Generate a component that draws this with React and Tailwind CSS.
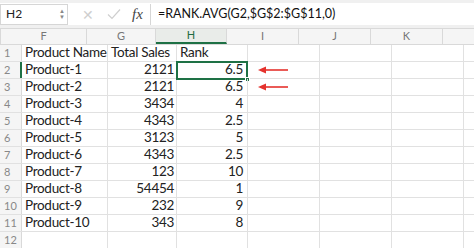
const rows = [
  ['Product Name', 'Total Sales', 'Rank'],
  ['Product-1', '2121', '6.5'],
  ['Product-2', '2121', '6.5'],
  ['Product-3', '3434', '4'],
  ['Product-4', '4343', '2.5'],
  ['Product-5', '3123', '5'],
  ['Product-6', '4343', '2.5'],
  ['Product-7', '123', '10'],
  ['Product-8', '54454', '1'],
  ['Product-9', '232', '9'],
  ['Product-10', '343', '8'],
  ['', '', ''],
];

const cols = [
  { key: 'F', w: 'w-[86px]' },
  { key: 'G', w: 'w-[69px]' },
  { key: 'H', w: 'w-[71px]' },
  { key: 'I', w: 'w-[72px]' },
  { key: 'J', w: 'w-[72px]' },
  { key: 'K', w: 'w-[72px]' },
  { key: '', w: 'w-[40px]' },
];

function Arrow() {
  return (
    <svg width="30" height="8" viewBox="0 0 30 8" className="block">
      <line x1="6" y1="4" x2="30" y2="4" stroke="#e5322d" strokeWidth="1.6" />
      <path d="M0 4 L8 0.5 L8 7.5 Z" fill="#e5322d" />
    </svg>
  );
}

export default function App() {
  return (
    <div
      className="w-[474px] h-[248px] overflow-hidden bg-white relative"
      style={{ fontFamily: 'Lato, "Noto Sans", sans-serif' }}
    >
      <div className="h-[3px] bg-[#f0f0f0]" />
      {/* formula bar */}
      <div className="h-[22px] flex items-center bg-white">
        <div className="w-[68px] h-[21px] border border-[#d6d6d6] flex items-center justify-between pl-[5px] pr-[2px] text-[12px] text-[#222]">
          <span>H2</span>
          <div className="flex flex-col items-center leading-none text-[#888] text-[6px]">
            <span>▲</span>
            <span>▼</span>
          </div>
        </div>
        <div className="w-[82px] flex items-center text-[#cfcfcf] text-[14px]">
          <span className="ml-[14px] font-light">✕</span>
          <svg width="14" height="12" viewBox="0 0 14 12" className="ml-[13px]">
            <path d="M1 6.5 L5 10.5 L13 1.5" stroke="#cfcfcf" strokeWidth="1.2" fill="none" />
          </svg>
          <span
            className="ml-[11px] text-[#444] italic text-[15px]"
            style={{ fontFamily: '"Liberation Serif", serif' }}
          >
            fx
          </span>
        </div>
        <div className="h-[21px] border-l border-[#d6d6d6] pl-[7px] flex items-center text-[12.5px] text-[#111]">
          =RANK.AVG(G2,$G$2:$G$11,0)
        </div>
      </div>
      <div className="h-[3px] bg-[#f0f0f0]" />
      {/* column headers */}
      <div className="flex h-[17px] bg-[#f5f5f5] border-y border-[#d9d9d9]">
        <div className="w-[22px] border-r border-[#d9d9d9] relative">
          <div className="absolute right-[2px] bottom-[2px] w-0 h-0 border-l-[10px] border-l-transparent border-b-[10px] border-b-[#cfcfcf]" />
        </div>
        {cols.map((c) => (
          <div
            key={c.key + c.w}
            className={`${c.w} shrink-0 border-r border-[#d9d9d9] flex items-center justify-center text-[11px] ${
              c.key === 'H' ? 'text-[#1e6b3f] border-b-2 border-b-[#1e7145] bg-[#e9ece9]' : 'text-[#777]'
            }`}
          >
            {c.key}
          </div>
        ))}
      </div>
      {/* grid */}
      {rows.map((r, i) => (
        <div key={i} className="flex h-[17px] border-b border-[#e1e1e1]">
          <div
            className={`w-[22px] shrink-0 bg-[#f5f5f5] border-r flex items-center pl-[4px] text-[11px] text-[#888] ${
              i === 1 ? 'border-r-2 border-r-[#1e7145]' : 'border-r-[#d9d9d9]'
            }`}
          >
            {i + 1}
          </div>
          <div className="w-[86px] shrink-0 border-r border-[#e1e1e1] flex items-center pl-[3px] text-[13.5px] tracking-[-0.3px] text-[#222] leading-none">
            {r[0]}
          </div>
          <div
            className={`w-[69px] shrink-0 border-r border-[#e1e1e1] flex items-center text-[13.5px] tracking-[-0.3px] text-[#222] leading-none ${
              i === 0 ? 'pl-[3px]' : 'justify-end pr-[2px]'
            }`}
          >
            {r[1]}
          </div>
          <div
            className={`w-[71px] shrink-0 border-r border-[#e1e1e1] flex items-center text-[13.5px] tracking-[-0.3px] text-[#222] leading-none relative ${
              i === 0 ? 'pl-[3px]' : 'justify-end pr-[4px]'
            }`}
          >
            {r[2]}
            {i === 1 && (
              <div className="absolute left-[-1px] top-[-1px] w-[72px] h-[19px] border-2 border-[#1e7145]">
                <div className="absolute right-[-4px] bottom-[-4px] w-[5px] h-[5px] bg-[#1e7145] border border-white" />
              </div>
            )}
          </div>
          <div className="w-[72px] shrink-0 border-r border-[#e1e1e1] flex items-center pl-[10px]">
            {(i === 1 || i === 2) && <Arrow />}
          </div>
          <div className="w-[72px] shrink-0 border-r border-[#e1e1e1]" />
          <div className="w-[72px] shrink-0 border-r border-[#e1e1e1]" />
          <div className="w-[40px] shrink-0" />
        </div>
      ))}
    </div>
  );
}
